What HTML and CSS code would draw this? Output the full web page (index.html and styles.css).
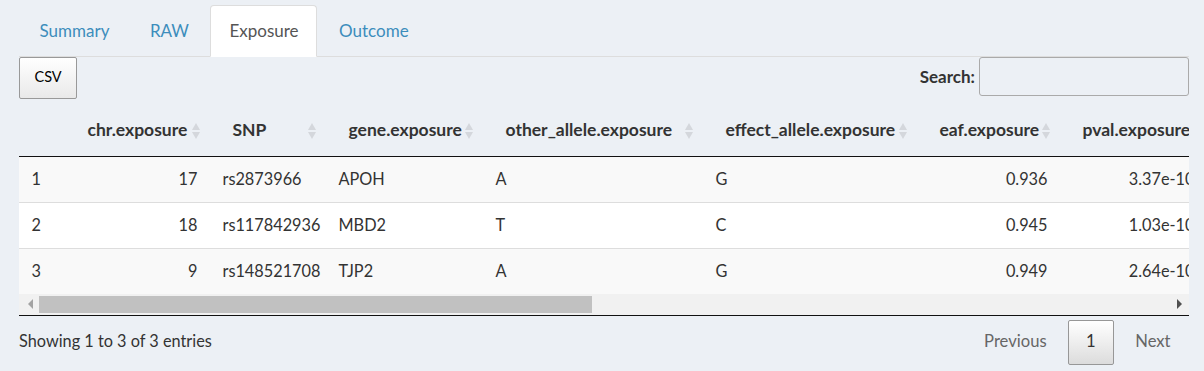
FILE: index.html
```html
<!DOCTYPE html>
<html lang="en">
<head>
    <meta charset="UTF-8">
    <meta name="viewport" content="width=device-width, initial-scale=1.0">
    <title>Exposure</title>
    <link rel="stylesheet" href="styles.css">
</head>
<body>
    <div class="panel">
        <ul class="tabs">
            <li><a href="#summary">Summary</a></li>
            <li><a href="#raw">RAW</a></li>
            <li class="active"><a href="#exposure">Exposure</a></li>
            <li><a href="#outcome">Outcome</a></li>
        </ul>

        <div class="table-wrapper">
            <div class="controls">
                <button class="csv-btn">CSV</button>
                <label class="search">Search:<input type="search"></label>
            </div>

            <div class="scroll-body">
                <table class="data-table">
                    <colgroup>
                        <col style="width: 46px">
                        <col style="width: 145px">
                        <col style="width: 116px">
                        <col style="width: 157px">
                        <col style="width: 220px">
                        <col style="width: 214px">
                        <col style="width: 143px">
                        <col style="width: 147px">
                        <col style="width: 140px">
                        <col style="width: 130px">
                        <col style="width: 200px">
                        <col style="width: 150px">
                        <col style="width: 180px">
                        <col style="width: 200px">
                        <col style="width: 206px">
                    </colgroup>
                    <thead>
                        <tr>
                            <th class="no-sort"></th>
                            <th class="num">chr.exposure</th>
                            <th>SNP</th>
                            <th>gene.exposure</th>
                            <th>other_allele.exposure</th>
                            <th>effect_allele.exposure</th>
                            <th class="num">eaf.exposure</th>
                            <th class="num">pval.exposure</th>
                            <th class="num">beta.exposure</th>
                            <th class="num">se.exposure</th>
                            <th class="num">samplesize.exposure</th>
                            <th>exposure</th>
                            <th>mr_keep.exposure</th>
                            <th>pval_origin.exposure</th>
                            <th>id.exposure</th>
                        </tr>
                    </thead>
                    <tbody>
                        <tr>
                            <td>1</td>
                            <td class="num">17</td>
                            <td>rs2873966</td>
                            <td>APOH</td>
                            <td>A</td>
                            <td>G</td>
                            <td class="num">0.936</td>
                            <td class="num">3.37e-10</td>
                            <td class="num">-0.212</td>
                            <td class="num">0.0335</td>
                            <td class="num">3301</td>
                            <td>exposure</td>
                            <td>TRUE</td>
                            <td>reported</td>
                            <td>fQk2Vx</td>
                        </tr>
                        <tr>
                            <td>2</td>
                            <td class="num">18</td>
                            <td>rs117842936</td>
                            <td>MBD2</td>
                            <td>T</td>
                            <td>C</td>
                            <td class="num">0.945</td>
                            <td class="num">1.03e-10</td>
                            <td class="num">0.241</td>
                            <td class="num">0.0372</td>
                            <td class="num">3301</td>
                            <td>exposure</td>
                            <td>TRUE</td>
                            <td>reported</td>
                            <td>fQk2Vx</td>
                        </tr>
                        <tr>
                            <td>3</td>
                            <td class="num">9</td>
                            <td>rs148521708</td>
                            <td>TJP2</td>
                            <td>A</td>
                            <td>G</td>
                            <td class="num">0.949</td>
                            <td class="num">2.64e-10</td>
                            <td class="num">0.236</td>
                            <td class="num">0.0367</td>
                            <td class="num">3301</td>
                            <td>exposure</td>
                            <td>TRUE</td>
                            <td>reported</td>
                            <td>fQk2Vx</td>
                        </tr>
                    </tbody>
                </table>
            </div>

            <!-- horizontal scroll bar of the table body -->
            <div class="scrollbar">
                <span class="sb-btn"><span class="arrow-left"></span></span>
                <span class="sb-track"><span class="sb-thumb" style="width: 48.9%"></span></span>
                <span class="sb-btn"><span class="arrow-right"></span></span>
            </div>

            <div class="table-footer">
                <div class="info">Showing 1 to 3 of 3 entries</div>
                <div class="paginate">
                    <a class="page-btn disabled">Previous</a>
                    <a class="page-btn current">1</a>
                    <a class="page-btn disabled">Next</a>
                </div>
            </div>
        </div>
    </div>
</body>
</html>
```

FILE: styles.css
```css
/* Page */
body {
    margin: 0;
    padding: 5px 0 0 0;
    background-color: #ecf0f5;
    color: #333;
    font-family: Lato, "Liberation Sans", sans-serif;
    font-size: 16.3px;
    line-height: 25px;
}

.panel {
    margin-left: 19px;
    width: 1170px;
}

/* Tabs */
.tabs {
    display: flex;
    list-style: none;
    margin: 0;
    padding: 0 0 0 1px;
    border-bottom: 1px solid #ddd;
    font-size: 17px;
}

.tabs li {
    margin-right: 2.5px;
    margin-bottom: -1px;
}

.tabs a {
    display: block;
    padding: 11.5px 17.5px 13.5px 18.5px;
    border: 1px solid transparent;
    border-radius: 4px 4px 0 0;
    color: #3c8dbc;
    text-decoration: none;
}

.tabs li.active a {
    background-color: #fff;
    border-color: #ddd;
    border-bottom-color: transparent;
    color: #555;
}

/* Buttons and search */
.controls {
    display: flex;
    justify-content: space-between;
    align-items: flex-start;
}

.csv-btn {
    font-family: inherit;
    font-size: 14.5px;
    line-height: 24.6px;
    padding: 7px 14.5px 8px;
    color: #000;
    border: 1px solid #999;
    border-radius: 2px;
    background: linear-gradient(to bottom, #fff 0%, #e9e9e9 100%);
    cursor: pointer;
}

.search {
    display: flex;
    align-items: center;
    font-weight: bold;
    font-size: 17px;
}

.search input {
    margin-left: 4px;
    width: 210px;
    height: 39px;
    box-sizing: border-box;
    border: 1px solid #aaa;
    border-radius: 3px;
    background: transparent;
    padding: 5px;
    font-family: inherit;
    font-size: 16px;
}

/* Table */
.scroll-body {
    margin-top: 7px;
    overflow: hidden;
}

.data-table {
    table-layout: fixed;
    width: 2394px;
    border-collapse: collapse;
}

.data-table th {
    position: relative;
    text-align: left;
    font-size: 17.5px;
    font-weight: bold;
    padding: 11.5px 24px 13.5px 22.5px;
    border-bottom: 1px solid #111;
    white-space: nowrap;
}

.data-table td {
    padding: 9px 12.5px 11px;
    white-space: nowrap;
    overflow: hidden;
}

.data-table .num {
    text-align: right;
}

/* sort arrows */
.data-table th::before,
.data-table th::after {
    content: "";
    position: absolute;
    right: 10px;
    border-left: 4px solid transparent;
    border-right: 4px solid transparent;
}

.data-table th::before {
    top: 17px;
    border-bottom: 7px solid #d4d7dc;
}

.data-table th::after {
    top: 26px;
    border-top: 7px solid #d4d7dc;
}

.data-table th.no-sort::before,
.data-table th.no-sort::after {
    display: none;
}

.data-table tbody tr {
    background-color: #fff;
    border-top: 1px solid #ddd;
}

.data-table tbody tr:first-child {
    border-top: none;
}

.data-table tbody tr:nth-child(odd) {
    background-color: #f9f9f9;
}

/* Scroll bar */
.scrollbar {
    display: flex;
    height: 21px;
    background-color: #f1f1f1;
    border-bottom: 1px solid #111;
}

.sb-btn {
    width: 20px;
    display: flex;
    align-items: center;
    justify-content: center;
}

.arrow-left {
    border-top: 5px solid transparent;
    border-bottom: 5px solid transparent;
    border-right: 5px solid #a3a3a3;
    margin-left: 2px;
}

.arrow-right {
    border-top: 5px solid transparent;
    border-bottom: 5px solid transparent;
    border-left: 5px solid #505050;
}

.sb-track {
    flex: 1;
    padding: 2px 0;
    display: flex;
}

.sb-thumb {
    background-color: #c1c1c1;
}

/* Footer */
.table-footer {
    display: flex;
    justify-content: space-between;
}

.info {
    padding-top: 12px;
}

.paginate {
    display: flex;
    padding-top: 4.5px;
    font-size: 16.6px;
}

.page-btn {
    margin-left: 2.5px;
    padding: 7.75px 17.5px 9.75px;
    border: 1px solid transparent;
    border-radius: 2px;
    color: #666;
    cursor: default;
}

.page-btn.current {
    color: #333;
    border-color: #979797;
    background: linear-gradient(to bottom, #fff 0%, #dcdcdc 100%);
}
```
